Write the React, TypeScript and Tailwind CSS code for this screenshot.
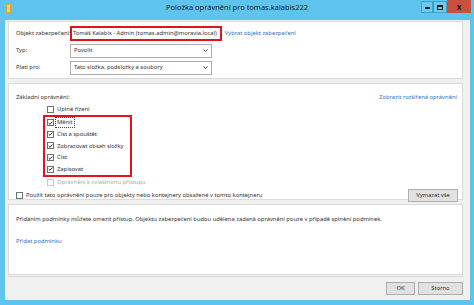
import React from 'react';

const Check: React.FC<{ checked?: boolean; disabled?: boolean }> = ({ checked, disabled }) => (
  <div
    className={`w-[7px] h-[7px] border flex items-center justify-center bg-white shrink-0 ${
      disabled ? 'border-[#c8c8c8]' : 'border-[#707070]'
    }`}
  >
    {checked && (
      <svg width="6" height="6" viewBox="0 0 6 6">
        <path d="M0.8 3.1 L2.4 4.6 L5.2 1.2" stroke="#1a1a1a" strokeWidth="1.1" fill="none" />
      </svg>
    )}
  </div>
);

const Select: React.FC<{ value: string }> = ({ value }) => (
  <div className="w-[142px] h-[14px] bg-white border border-[#acacac] flex items-center justify-between pl-[3px] pr-[3px]">
    <span>{value}</span>
    <svg width="5" height="3" viewBox="0 0 5 3">
      <path d="M0.5 0.5 L2.5 2.5 L4.5 0.5" stroke="#404040" strokeWidth="1" fill="none" />
    </svg>
  </div>
);

const perms = [
  { label: 'Měnit', checked: true, focus: true },
  { label: 'Číst a spouštět', checked: true },
  { label: 'Zobrazovat obsah složky', checked: true },
  { label: 'Číst', checked: true },
  { label: 'Zapisovat', checked: true },
];

const App: React.FC = () => {
  return (
    <div className="w-[474px] h-[305px] bg-[#5ec4ee] flex flex-col font-['Noto_Sans',sans-serif] text-[5.8px] text-[#303030] whitespace-nowrap overflow-hidden">
      {/* title bar */}
      <div className="h-[20px] relative flex items-center justify-center shrink-0">
        <div className="absolute left-[6px] top-[4px] w-[5px] h-[9px] bg-[#f2d26a] border border-[#d9aa3a]" />
        <span className="text-[7.5px] text-[#1a1a1a] mt-[-4px]">Položka oprávnění pro tomas.kalabis222</span>
        <div className="absolute right-[3px] top-0 flex h-[13px]">
          <div className="w-[12px] h-[12px] mt-[1px] border border-[#3d9fc8] bg-[#6ccbf0] flex items-center justify-center">
            <div className="w-[5px] h-[2px] bg-[#1a1a1a] mt-[2px]" />
          </div>
          <div className="w-[14px] h-[12px] mt-[1px] border border-[#3d9fc8] bg-[#6ccbf0] flex items-center justify-center">
            <div className="w-[6px] h-[5px] border-[1.5px] border-t-[2px] border-[#1a1a1a]" />
          </div>
          <div className="w-[24px] h-[13px] bg-[#c9503f] flex items-center justify-center text-[8px] font-bold text-[#2a1010] leading-none">
            x
          </div>
        </div>
      </div>

      {/* client area */}
      <div className="flex-1 ml-[5px] mr-[4px] mb-[5px] bg-[#f0f0f0] flex flex-col pl-[3px] pr-[7px] pt-[1px]">
        {/* panel 1 */}
        <div className="h-[58px] bg-white border border-[#dadada] flex flex-col pl-[7px] pt-[4px] gap-[2px] shrink-0">
          <div className="flex items-center h-[15px]">
            <span className="w-[54px]">Objekt zabezpečení:</span>
            <div className="border-2 border-[#e0141e] h-[15px] flex items-center pl-[1px] pr-[3px]">
              Tomáš Kalabis - Admin (tomas.admin@moravia.local)
            </div>
            <span className="ml-[3px] text-[#2e6fc0]">Vybrat objekt zabezpečení</span>
          </div>
          <div className="flex items-center h-[15px]">
            <span className="w-[54px]">Typ:</span>
            <Select value="Povolit" />
          </div>
          <div className="flex items-center h-[15px]">
            <span className="w-[54px]">Platí pro:</span>
            <Select value="Tato složka, podsložky a soubory" />
          </div>
        </div>

        {/* panel 2 */}
        <div className="h-[117px] mt-[4px] bg-white border border-[#dadada] flex flex-col pl-[7px] pr-[4px] pt-[9px] shrink-0">
          <div className="flex justify-between items-center h-[8px]">
            <span>Základní oprávnění:</span>
            <span className="text-[#2e6fc0] mr-[1px]">Zobrazit rozšířená oprávnění</span>
          </div>
          <div className="flex flex-col ml-[31px] mt-[3px]">
            <div className="flex items-center gap-[3px] h-[11px]">
              <Check />
              <span>Úplné řízení</span>
            </div>
            <div className="border-2 border-[#e0141e] w-[89px] -ml-[4px] pl-[2px] flex flex-col">
              {perms.map((p) => (
                <div key={p.label} className="flex items-center gap-[3px] h-[11.6px]">
                  <Check checked={p.checked} />
                  <span className={p.focus ? 'border border-dotted border-[#404040] px-[1px] -ml-[2px]' : ''}>
                    {p.label}
                  </span>
                </div>
              ))}
            </div>
            <div className="flex items-center gap-[3px] h-[11px]">
              <Check disabled />
              <span className="text-[#a8a8a8]">Oprávnění k zvláštnímu přístupu</span>
            </div>
          </div>
          <div className="flex items-center justify-between mt-[1px]">
            <div className="flex items-center gap-[3px]">
              <Check />
              <span>Použít tato oprávnění pouze pro objekty nebo kontejnery obsažené v tomto kontejneru</span>
            </div>
            <div className="w-[50px] h-[13px] bg-[#e1e1e1] border border-[#adadad] flex items-center justify-center">
              Vymazat vše
            </div>
          </div>
        </div>

        {/* panel 3 */}
        <div className="h-[71px] mt-[4px] bg-white border border-[#dadada] flex flex-col pl-[7px] pt-[10px] shrink-0">
          <span>
            Přidáním podmínky můžete omezit přístup. Objektu zabezpečení budou udělena zadaná oprávnění pouze v případě splnění podmínek.
          </span>
          <span className="text-[#2e6fc0] mt-[13px]">Přidat podmínku</span>
        </div>

        {/* bottom bar */}
        <div className="flex-1 border-t border-[#dadada] mt-[1px] flex items-center justify-end gap-[3px] pb-[1px]">
          <div className="w-[29px] h-[13px] bg-[#e1e1e1] border border-[#adadad] flex items-center justify-center">
            OK
          </div>
          <div className="w-[45px] h-[13px] bg-[#e1e1e1] border border-[#adadad] flex items-center justify-center">
            Storno
          </div>
        </div>
      </div>
    </div>
  );
};

export default App;
